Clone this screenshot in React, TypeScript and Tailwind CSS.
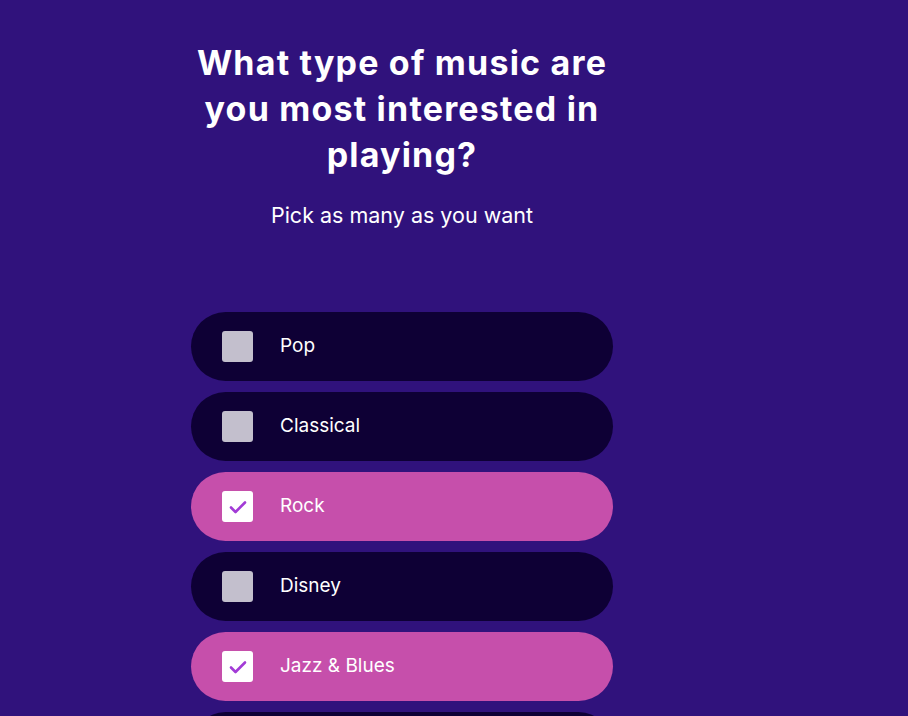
import React, { useState } from 'react';

const GENRES = ['Pop', 'Classical', 'Rock', 'Disney', 'Jazz & Blues', 'Hip Hop', 'Country'];

const CheckIcon = () => (
    <svg width="20" height="20" viewBox="0 0 20 20" fill="none">
        <path d="M3 10.5 L7.5 15 L17 5.5" stroke="#a23bd6" strokeWidth="2.6" strokeLinecap="round" strokeLinejoin="round" />
    </svg>
);

const GenreRow = ({ label, checked, onToggle }: { label: string, checked: boolean, onToggle: () => void }) => (
    <button
        onClick={onToggle}
        className={`flex items-center h-[69px] w-full rounded-full pl-[31px] text-left ${checked ? 'bg-[#c64fab]' : 'bg-[#0e0035]'}`}
    >
        <span className={`flex items-center justify-center size-[31px] rounded-[3px] shrink-0 ${checked ? 'bg-white' : 'bg-[#c3bfcd]'}`}>
            {checked && <CheckIcon />}
        </span>
        <span className="ml-[27px] text-[19px] text-white leading-none -mt-[2px]">{label}</span>
    </button>
);

export default function App() {
    const [selected, setSelected] = useState<string[]>(['Rock', 'Jazz & Blues']);

    const toggle = (g: string) =>
        setSelected(s => (s.includes(g) ? s.filter(x => x !== g) : [...s, g]));

    return (
        <div className="min-h-screen w-full bg-[#30127c] font-['Inter','Noto_Sans',sans-serif] overflow-hidden">
            <div className="ml-[191px] w-[422px] pt-[40px] flex flex-col items-center">
                <h1 className="text-white text-[34px] leading-[46px] font-bold tracking-[0.035em] text-center font-['Inter',sans-serif] whitespace-nowrap">
                    What type of music are<br />you most interested in<br />playing?
                </h1>
                <p className="mt-[23px] text-white text-[21.5px] leading-[28px] text-center">Pick as many as you want</p>
                <div className="mt-[83px] flex flex-col gap-[11px] w-full">
                    {GENRES.map(g => (
                        <GenreRow key={g} label={g} checked={selected.includes(g)} onToggle={() => toggle(g)} />
                    ))}
                </div>
            </div>
        </div>
    );
}
